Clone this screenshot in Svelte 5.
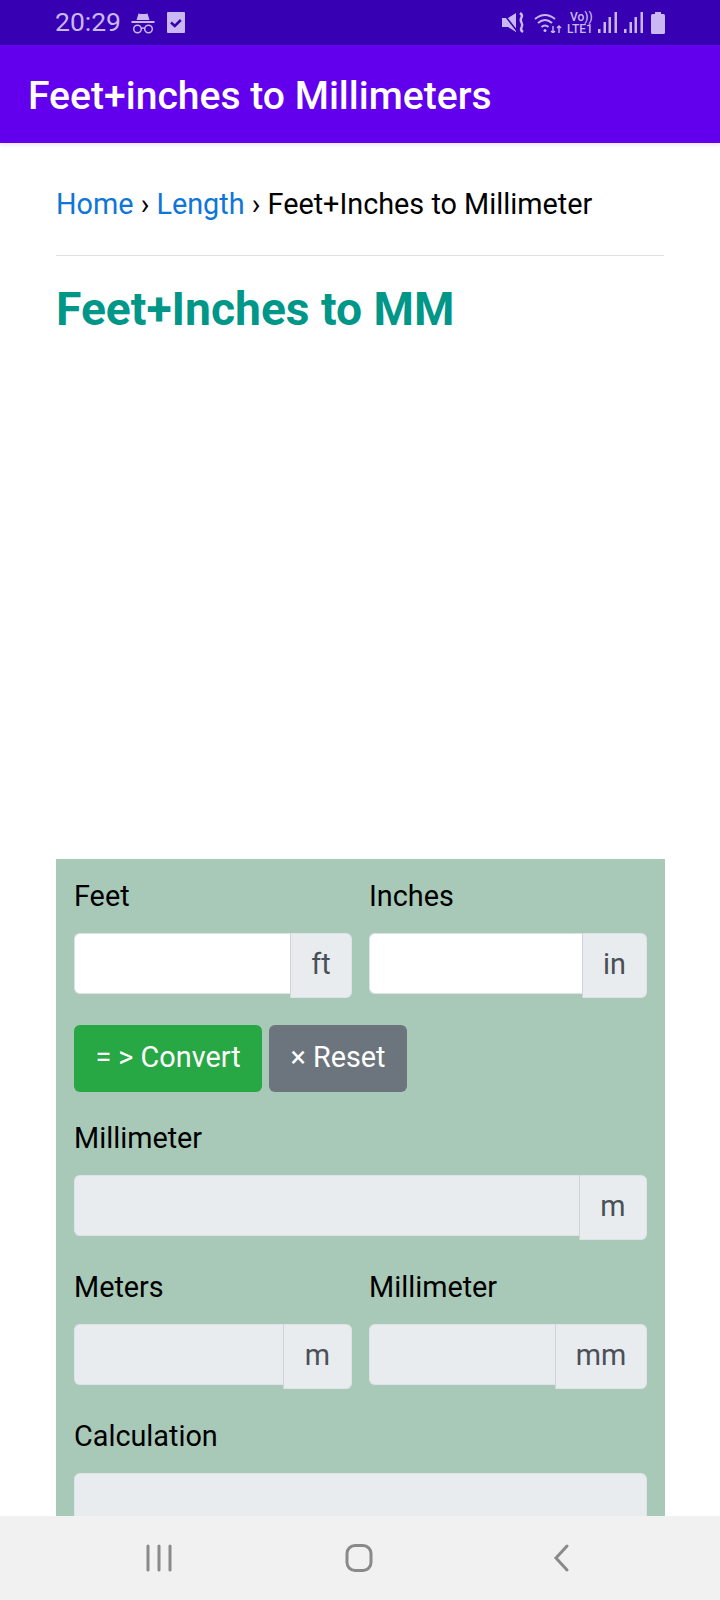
<script>
  const rows = [
    [{ label: "Meters", unit: "m", addon: 69 }, { label: "Millimeter", unit: "mm", addon: 92 }],
  ];
</script>

<div class="screen">
  <div class="status">
    <div class="status-left">
      <span class="time">20:29</span>
      <svg class="spy" width="24" height="22" viewBox="0 0 24 22" fill="none">
        <path d="M5.500 8 7.500 1.500q4.500 1 9 0l2 6.500z" fill="currentColor"/>
        <path d="M0.500 10h23" stroke="currentColor" stroke-width="2"/>
        <circle cx="6.500" cy="17" r="3.800" stroke="currentColor" stroke-width="1.500"/>
        <circle cx="17.500" cy="17" r="3.800" stroke="currentColor" stroke-width="1.500"/>
        <path d="M10 16.500q2-1 4 0" stroke="currentColor" stroke-width="1.300"/>
      </svg>
      <svg class="check" width="18" height="21" viewBox="0 0 18 21">
        <path d="M1 0h16a1 1 0 0 1 1 1v19a1 1 0 0 1-1 1H1a1 1 0 0 1-1-1V1a1 1 0 0 1 1-1z" fill="currentColor"/>
        <path d="M4 10.500 7.800 14l6-6" fill="none" stroke="#3700b3" stroke-width="2.500"/>
      </svg>
    </div>
    <div class="status-right">
      <svg class="mute" width="23" height="21" viewBox="0 0 23 21" fill="none">
        <path d="M0 6h6l8-5v19l-8-5H0z" fill="currentColor"/>
        <path d="M1 1l14 18" stroke="#3700b3" stroke-width="1.600"/>
        <path d="M18 1q3 2 1.500 4.500t0 5 0 5 1.500 4.500" stroke="currentColor" stroke-width="2.400"/>
      </svg>
      <svg class="wifi" width="28" height="21" viewBox="0 0 28 21" fill="none" stroke="currentColor" stroke-width="2">
        <path d="M1 7q10-8 20 0M4 11q7-6 14 0M7.500 15q3.500-3 7 0"/>
        <circle cx="11" cy="18.500" r="1.500" fill="currentColor" stroke="none"/>
        <path d="M19 14v7M17 19l2 2 2-2M25 21v-7M23 16l2-2 2 2" stroke-width="1.400"/>
      </svg>
      <div class="volte"><span>Vo))</span><span>LTE1</span></div>
      <svg class="signal" width="19" height="21" viewBox="0 0 19 21" fill="currentColor">
        <rect x="0" y="17" width="2.500" height="4"/>
        <rect x="5.500" y="10" width="2.500" height="11"/>
        <rect x="10.500" y="5" width="2.500" height="16"/>
        <rect x="16.500" y="0" width="2.500" height="21"/>
      </svg>
      <svg class="signal second" width="19" height="21" viewBox="0 0 19 21" fill="currentColor">
        <rect x="0" y="17" width="2.500" height="4"/>
        <rect x="5.500" y="10" width="2.500" height="11"/>
        <rect x="10.500" y="5" width="2.500" height="16"/>
        <rect x="16.500" y="0" width="2.500" height="21"/>
      </svg>
      <svg class="battery" width="14" height="22" viewBox="0 0 14 22" fill="currentColor">
        <rect x="4" y="0" width="6" height="3"/>
        <rect x="0" y="2" width="14" height="20" rx="1.500"/>
      </svg>
    </div>
  </div>

  <header class="appbar">Feet+inches to Millimeters</header>

  <main>
    <nav class="crumbs">
      <a href="#home">Home</a> › <a href="#length">Length</a> › Feet+Inches to Millimeter
    </nav>
    <hr />
    <h1>Feet+Inches to MM</h1>

    <div class="ad"></div>

    <form class="panel">
      <div class="cols first">
        <div>
          <div class="label">Feet</div>
          <div class="group">
            <div class="input"></div>
            <span class="addon" style="width: 62px">ft</span>
          </div>
        </div>
        <div>
          <div class="label">Inches</div>
          <div class="group">
            <div class="input"></div>
            <span class="addon" style="width: 65px">in</span>
          </div>
        </div>
      </div>

      <div class="buttons">
        <button type="button" class="btn convert">= &gt; Convert</button>
        <button type="button" class="btn reset">× Reset</button>
      </div>

      <div class="label">Millimeter</div>
      <div class="group wide">
        <div class="input off"></div>
        <span class="addon" style="width: 68px">m</span>
      </div>

      {#each rows as row}
        <div class="cols">
          {#each row as f}
            <div>
              <div class="label">{f.label}</div>
              <div class="group">
                <div class="input off"></div>
                <span class="addon" style="width: {f.addon}px">{f.unit}</span>
              </div>
            </div>
          {/each}
        </div>
      {/each}

      <div class="label">Calculation</div>
      <div class="input off area"></div>
    </form>
  </main>

  <div class="navbar">
    <svg width="28" height="28" viewBox="0 0 28 28" fill="none" stroke="#8a8a8a" stroke-width="3" stroke-linecap="round">
      <path d="M3 2v24M14 2v24M25 2v24"/>
    </svg>
    <svg width="28" height="30" viewBox="0 0 28 30" fill="none" stroke="#8a8a8a" stroke-width="3">
      <rect x="2" y="2.500" width="24" height="25" rx="8"/>
    </svg>
    <svg class="back" width="16" height="28" viewBox="0 0 16 28" fill="none" stroke="#8a8a8a" stroke-width="3" stroke-linecap="round">
      <path d="M14 2 3 14l11 12"/>
    </svg>
  </div>
</div>

<style>
  :global(body) {
    margin: 0;
  }

  .screen {
    width: 720px;
    height: 1600px;
    display: flex;
    flex-direction: column;
    overflow: hidden;
    background: white;
    font-family: Roboto, sans-serif;
    font-size: 28.8px;
    color: #000;
  }

  .status {
    height: 45px;
    flex-shrink: 0;
    background: #3700b3;
    color: #c9b8f2;
    display: flex;
    justify-content: space-between;
    align-items: center;
    padding: 0 55px;
    box-sizing: border-box;
  }

  .status-left {
    display: flex;
    align-items: center;
  }

  .time {
    font-size: 26.500px;
    line-height: 1;
    margin-right: 10px;
  }

  .spy {
    margin-right: 12px;
  }

  .status-right {
    display: flex;
    align-items: center;
  }

  .wifi {
    margin-left: 9px;
  }

  .volte {
    display: flex;
    flex-direction: column;
    font-size: 12px;
    line-height: 12px;
    font-weight: 500;
    width: 28px;
    margin-left: 5px;
  }

  .volte span:first-child {
    padding-left: 3px;
  }

  .signal {
    margin-left: 3px;
  }

  .signal.second {
    margin-left: 7px;
  }

  .battery {
    margin-left: 8px;
  }

  .appbar {
    height: 98px;
    flex-shrink: 0;
    background: #6200ee;
    color: white;
    font-size: 39.100px;
    font-weight: 500;
    line-height: 102px;
    padding-left: 28px;
    box-shadow: 0 2px 4px rgba(98, 0, 238, 0.12);
    position: relative;
  }

  main {
    flex: 1;
    min-height: 0;
    overflow: hidden;
    padding: 0 56px;
  }

  .crumbs {
    margin-top: 40px;
    line-height: 43px;
  }

  a {
    color: #0e76d8;
    text-decoration: none;
  }

  hr {
    border: 0;
    border-top: 1px solid #e2e2e2;
    margin: 29px 0 0;
  }

  h1 {
    margin: 26px 0 0;
    color: #009688;
    font-size: 46.200px;
    font-weight: 700;
    line-height: 55px;
  }

  .ad {
    height: 522px;
  }

  .panel {
    background: #a8c9b8;
    padding: 15px 18px 0;
    width: 609px;
    box-sizing: border-box;
  }

  .cols {
    display: grid;
    grid-template-columns: 278px 278px;
    gap: 17px;
    margin-bottom: 25px;
  }

  .cols.first {
    margin-bottom: 27px;
  }

  .label {
    line-height: 45px;
    margin-bottom: 14px;
  }

  .group {
    display: flex;
    align-items: flex-start;
  }

  .group.wide {
    margin-bottom: 25px;
  }

  .input {
    flex: 1;
    height: 61px;
    box-sizing: border-box;
    background: white;
    border: 1px solid #dfe3e7;
    border-right: 0;
    border-radius: 6px 0 0 6px;
  }

  .input.off {
    background: #e9ecef;
  }

  .input.area {
    height: 120px;
    border-right: 1px solid #dfe3e7;
    border-radius: 6px;
  }

  .addon {
    height: 65px;
    box-sizing: border-box;
    background: #e9ecef;
    border: 1px solid #ced4da;
    border-top-color: #dfe3e7;
    border-right-color: #dfe3e7;
    border-bottom-color: #dfe3e7;
    border-radius: 0 6px 6px 0;
    color: #495057;
    line-height: 60px;
    text-align: center;
  }

  .buttons {
    display: flex;
    gap: 7px;
    margin-bottom: 24px;
  }

  .btn {
    height: 67px;
    border: 0;
    border-radius: 6px;
    color: white;
    font: inherit;
    padding: 0 0 4px;
  }

  .convert {
    width: 188px;
    background: #28a745;
  }

  .reset {
    width: 138px;
    background: #6c757d;
  }

  .navbar {
    height: 84px;
    flex-shrink: 0;
    background: #f1f1f1;
    display: grid;
    grid-template-columns: 318px 82px 1fr;
    align-items: center;
    justify-items: center;
    position: relative;
  }

  .back {
    margin-left: 1px;
  }
</style>
